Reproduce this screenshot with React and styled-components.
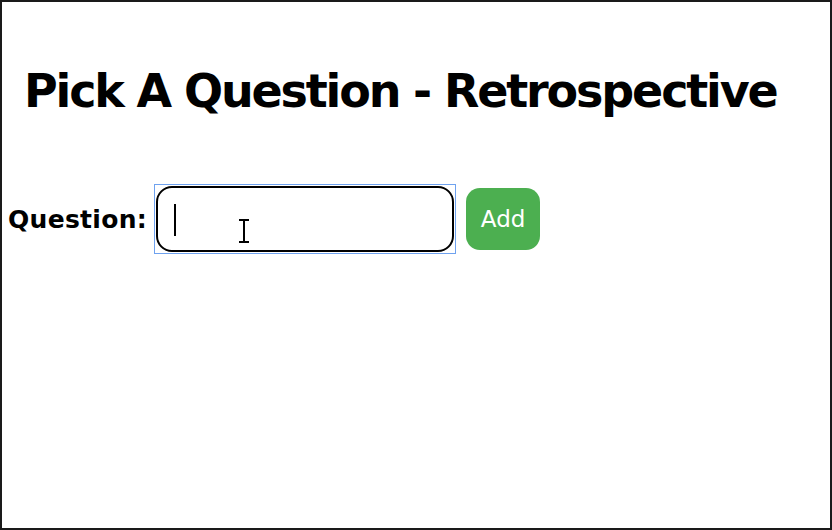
import React from 'react';
import styled, { createGlobalStyle } from 'styled-components';

const GlobalStyle = createGlobalStyle`
  html, body {
    margin: 0;
    padding: 0;
    background: #ffffff;
  }
  body {
    font-family: "DejaVu Sans", sans-serif;
  }
`;

const Frame = styled.div`
  box-sizing: border-box;
  width: 832px;
  height: 530px;
  border: 2px solid #1a1a1a;
  padding: 49px 0 0 22px;
`;

const Title = styled.h1`
  margin: 0;
  font-family: "DejaVu Sans", sans-serif;
  font-weight: bold;
  font-size: 46px;
  line-height: 80px;
  color: #000;
  letter-spacing: -2.15px;
`;

const Form = styled.div`
  display: flex;
  align-items: center;
  margin: 53px 0 0 -16px;
`;

const Label = styled.label`
  font-family: "DejaVu Sans", sans-serif;
  font-weight: bold;
  font-size: 25px;
  letter-spacing: 0.3px;
  color: #000;
  margin-right: 7px;
  white-space: nowrap;
`;

const FieldWrap = styled.div`
  position: relative;
  border: 1px solid #6fa2ef;
  padding: 1px;
  display: flex;
  margin-right: 10px;
`;

const Input = styled.div`
  box-sizing: border-box;
  width: 298px;
  height: 66px;
  border: 2.5px solid #000;
  border-radius: 16px;
  background: #fff;
`;

const Caret = styled.span`
  position: absolute;
  left: 19px;
  top: 19px;
  width: 2px;
  height: 32px;
  background: #000;
`;

const Pointer = styled.svg`
  position: absolute;
  left: 83px;
  top: 34px;
`;

const AddButton = styled.button`
  width: 74px;
  height: 62px;
  border: none;
  border-radius: 14px;
  background: #4caf50;
  color: #fff;
  font-family: "DejaVu Sans", sans-serif;
  font-size: 23px;
  padding: 0;
`;

export default function App() {
  return (
    <>
      <GlobalStyle />
      <Frame>
        <Title>Pick A Question - Retrospective</Title>
        <Form>
          <Label htmlFor="question">Question:</Label>
          <FieldWrap>
            <Input id="question" />
            <Caret />
            <Pointer width="12" height="24" viewBox="0 0 12 24">
              <path d="M1 1h10M1 23h10M6 1v22" stroke="#000" strokeWidth="2" fill="none" />
            </Pointer>
          </FieldWrap>
          <AddButton>Add</AddButton>
        </Form>
      </Frame>
    </>
  );
}
